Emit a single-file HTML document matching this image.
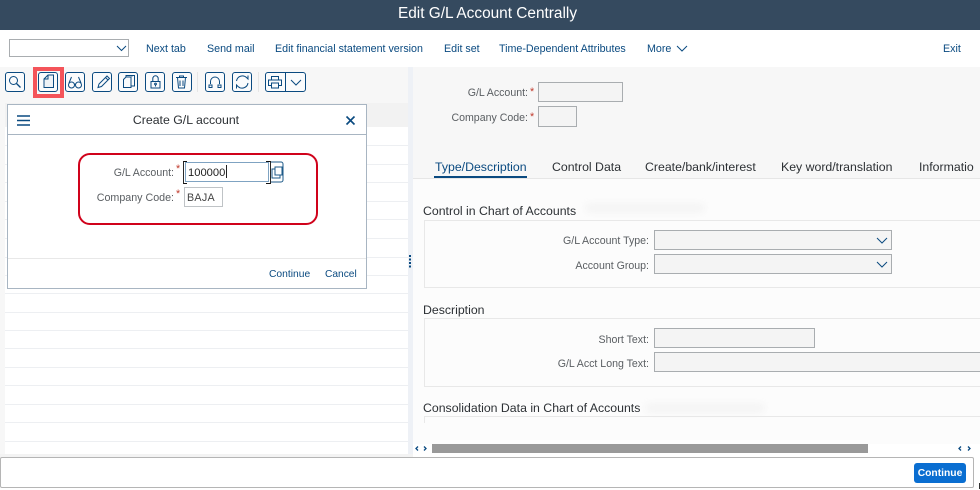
<!DOCTYPE html>
<html><head><meta charset="utf-8">
<style>
html,body{margin:0;padding:0;background:#fff}
#p{position:relative;width:980px;height:490px;overflow:hidden;background:#f7f7f7;font-family:"Liberation Sans",sans-serif;font-size:10.7px;color:#32363a}
#p div,#p span.t{position:absolute;box-sizing:border-box}
.t{white-space:nowrap;line-height:14px}
.l{color:#0a4a80}
.lab{color:#5a5e62;text-align:right;font-size:10.6px}
.inp{background:#f4f4f4;border:1px solid #a9adb0}
.h{font-size:12.3px;color:#2c3034}
.rw{height:1px;background:#edeff2;left:5px;width:403px}
.box{border:1px solid #e8e8e8;background:#fcfcfc}
.b{width:20px;height:20px;border:1px solid #0a4a80;border-radius:3px;background:#fafbfc;top:72px}
svg{position:absolute;left:0;top:0;overflow:visible}
</style></head><body><div id="p">

<div style="left:0;top:0;width:980px;height:30px;background:#354a5f"></div>
<span class="t" style="left:0;top:5px;width:975px;text-align:center;color:#fff;font-size:15.4px;line-height:18px">Edit G/L Account Centrally</span>

<div style="left:0;top:30px;width:980px;height:37px;background:#fff"></div>
<div style="left:9px;top:39px;width:120px;height:18px;border:1px solid #a9adb0;background:#fff"></div>
<svg width="980" height="70"><path d="M117 46l4.500 4.500 4.500-4.500" fill="none" stroke="#0a4a80" stroke-width="1"/><path d="M677 46l5 5 5-5" fill="none" stroke="#0a4a80" stroke-width="1"/></svg>
<span class="t l" style="left:146px;top:42px">Next tab</span>
<span class="t l" style="left:207px;top:42px">Send mail</span>
<span class="t l" style="left:275px;top:42px">Edit financial statement version</span>
<span class="t l" style="left:444px;top:42px">Edit set</span>
<span class="t l" style="left:499px;top:42px">Time-Dependent Attributes</span>
<span class="t l" style="left:647px;top:42px">More</span>
<span class="t l" style="left:943px;top:42px">Exit</span>

<div style="left:5px;top:103px;width:403px;height:24px;background:#f2f2f2"></div>
<div style="left:5px;top:127px;width:403px;height:327px;background:#fff"></div>
<div class="rw" style="top:145px"></div><div class="rw" style="top:164px"></div><div class="rw" style="top:182px"></div><div class="rw" style="top:201px"></div><div class="rw" style="top:219px"></div><div class="rw" style="top:238px"></div><div class="rw" style="top:257px"></div><div class="rw" style="top:275px"></div><div class="rw" style="top:293px"></div><div class="rw" style="top:312px"></div><div class="rw" style="top:330px"></div><div class="rw" style="top:348px"></div><div class="rw" style="top:367px"></div><div class="rw" style="top:385px"></div><div class="rw" style="top:404px"></div><div class="rw" style="top:422px"></div><div class="rw" style="top:441px"></div>
<div style="left:408px;top:67px;width:5px;height:391px;background:#eef1f6"></div>
<div style="left:409px;top:255px;width:2px;height:14px;background:repeating-linear-gradient(#0a4a80 0 2px,transparent 2px 3.5px)"></div>

<div class="b" style="left:5px"></div>
<div class="b" style="left:38px"></div>
<div class="b" style="left:65px"></div>
<div class="b" style="left:92px"></div>
<div class="b" style="left:118px"></div>
<div class="b" style="left:145px"></div>
<div class="b" style="left:172px"></div>
<div class="b" style="left:205px"></div>
<div class="b" style="left:232px"></div>
<div class="b" style="left:265px;width:41px"></div>
<div style="left:285px;top:72px;width:1px;height:20px;background:#0a4a80"></div>
<div style="left:197px;top:72px;width:1px;height:20px;background:#e6e6e6"></div>
<div style="left:258px;top:72px;width:1px;height:20px;background:#e6e6e6"></div>
<div style="left:33px;top:67px;width:31px;height:31px;border:4px solid #f4545a"></div>
<svg width="320" height="100" fill="none" stroke="#0a4a80" stroke-width="1">
<circle cx="13.500" cy="80.500" r="4"/><path d="M16.500 83.500l4 4" stroke-width="1.300"/>
<path d="M44 87.500V79l4-4h5.500v12.500zM44 79h4v-4" fill="#eef2f6"/>
<circle cx="71.500" cy="85" r="3"/><circle cx="78.500" cy="85" r="3"/><path d="M74.500 84.500q.5-.7 1 0M69 83l2.500-6M81 83l-2.500-6"/>
<path d="M98 87.500l1-3.500 8-8 2.500 2.500-8 8zM105.500 77.500l2.500 2.500"/>
<path d="M123.500 87.500v-8l2.500-2.500h5v10.500zM126 77v-1.500h6v1M132 75.500h2.500v10.500h-3"/>
<path d="M151 81.500h9v6.500h-9zM152.800 81.500v-3a2.700 2.700 0 0 1 5.400 0v3"/><circle cx="155.500" cy="84" r=".9"/><path d="M155.500 84.500v2"/>
<path d="M176 77.500h11M179.500 77.500v-1.500h4v1.500M177.500 77.500l1 10.500h6l1-10.500M180 80.500v5.500M183 80.500v5.500"/>
<path d="M210.500 84v-2.500a4.500 4.500 0 0 1 9 0v2.500"/><path d="M209 85h3v2.500h-3zM218 85h3v2.500h-3z"/>
<path d="M236.500 81a6 6 0 0 1 10-3.500l1.500 1.500v-3.500M248 83a6 6 0 0 1-10 3.500l-1.500-1.500v3.500"/>
<path d="M271.500 80v-3.500h7v3.500M271 85.500h-2.500V80h13v5.500H279M271.500 83h7v5h-7z"/>
<path d="M291 80l5 5 5-5"/>
</svg>

<div style="left:413px;top:67px;width:567px;height:111px;background:#f7f7f7"></div>
<div style="left:413px;top:178px;width:567px;height:266px;background:#fcfcfc"></div>
<div style="left:413px;top:178px;width:567px;height:1px;background:#e6e6e6"></div>
<div style="left:413px;top:444px;width:567px;height:14px;background:#fff"></div>

<span class="t lab" style="left:440px;top:86px;width:88px">G/L Account:</span>
<span class="t" style="left:530px;top:85px;color:#c0392b">*</span>
<div class="inp" style="left:538px;top:82px;width:85px;height:20px"></div>
<span class="t lab" style="left:430px;top:111px;width:98px">Company Code:</span>
<span class="t" style="left:530px;top:110px;color:#c0392b">*</span>
<div class="inp" style="left:538px;top:106px;width:39px;height:21px"></div>

<span class="t h" style="left:435px;top:160px;color:#0a4a80">Type/Description</span>
<div style="left:434px;top:176px;width:93px;height:2px;background:#0a4a80"></div>
<span class="t h" style="left:552px;top:160px">Control Data</span>
<span class="t h" style="left:645px;top:160px">Create/bank/interest</span>
<span class="t h" style="left:781px;top:160px">Key word/translation</span>
<span class="t h" style="left:919px;top:160px">Informatio</span>

<span class="t h" style="left:423px;top:204px">Control in Chart of Accounts</span>
<div style="left:585px;top:203px;width:120px;height:10px;background:#f5f5f5;filter:blur(3px);border-radius:5px"></div>
<div class="box" style="left:424px;top:220px;width:570px;height:68px"></div>
<span class="t lab" style="left:520px;top:234px;width:129px">G/L Account Type:</span>
<div class="inp" style="left:654px;top:230px;width:238px;height:20px"></div>
<span class="t lab" style="left:520px;top:259px;width:129px">Account Group:</span>
<div class="inp" style="left:654px;top:254px;width:238px;height:20px"></div>
<svg width="980" height="280"><path d="M877 238l5 5 5-5M877 262l5 5 5-5" fill="none" stroke="#0a4a80" stroke-width="1"/></svg>

<span class="t h" style="left:423px;top:303px">Description</span>
<div class="box" style="left:424px;top:318px;width:570px;height:69px"></div>
<span class="t lab" style="left:520px;top:333px;width:129px">Short Text:</span>
<div class="inp" style="left:654px;top:328px;width:161px;height:20px"></div>
<span class="t lab" style="left:520px;top:357px;width:129px">G/L Acct Long Text:</span>
<div class="inp" style="left:654px;top:352px;width:340px;height:20px"></div>

<span class="t h" style="left:423px;top:401px">Consolidation Data in Chart of Accounts</span>
<div style="left:645px;top:403px;width:120px;height:10px;background:#f5f5f5;filter:blur(3px);border-radius:5px"></div>
<div style="left:424px;top:416px;width:556px;height:1px;background:#e8e8e8"></div>
<div style="left:424px;top:416px;width:1px;height:7px;background:#e8e8e8"></div>

<div style="left:432px;top:444px;width:436px;height:9px;background:#999"></div>
<svg width="980" height="460"><path d="M418 446.500l-2 2 2 2M424 446.500l2 2-2 2M961 446.500l-2 2 2 2M968 446.500l2 2-2 2" fill="none" stroke="#0a4a80" stroke-width="1.300"/></svg>

<div style="left:0;top:454px;width:413px;height:4px;background:#f3f3f3"></div>
<div style="left:0;top:458px;width:980px;height:32px;background:#fff"></div>
<div style="left:0;top:457px;width:974px;height:31px;background:#fff;border:1px solid #b5b5b5;border-radius:2px"></div>
<div style="left:914px;top:463px;width:52px;height:20px;background:#0a6ed1;border-radius:3px;color:#fff;font-weight:bold;font-size:10.3px;line-height:21px;text-align:center">Continue</div>
<div style="left:979px;top:483px;width:1px;height:6px;background:#333"></div>

<div style="left:7px;top:104px;width:360px;height:185px;background:#fff;border:1px solid #a8b5c2"></div>
<div style="left:8px;top:134px;width:358px;height:1px;background:#a8b5c2"></div>
<div style="left:8px;top:258px;width:358px;height:1px;background:#e8e8e8"></div>
<span class="t" style="left:6px;top:113px;width:360px;text-align:center;font-size:12.3px;color:#2c3034">Create G/L account</span>
<svg width="380" height="300" fill="none" stroke="#0a4a80">
<path d="M17 116h13M17 120.500h13M17 125h13" stroke-width="1.400"/>
<path d="M346.500 116.500l8 8M354.500 116.500l-8 8" stroke-width="1.600"/>
</svg>
<div style="left:78px;top:153px;width:240px;height:72px;border:2.500px solid #d0021b;border-radius:12px"></div>
<span class="t lab" style="left:90px;top:166px;width:84px">G/L Account:</span>
<span class="t" style="left:176px;top:162px;color:#c0392b">*</span>
<span class="t lab" style="left:80px;top:191px;width:94px;font-size:10.7px">Company Code:</span>
<span class="t" style="left:176px;top:187px;color:#c0392b">*</span>
<div style="left:185px;top:162px;width:84px;height:20px;background:#fff;border:1px solid #7fa3c2"></div>
<span class="t" style="left:188px;top:166px;font-size:11.2px;color:#222">100000</span>
<div style="left:226px;top:165px;width:1px;height:13px;background:#222"></div>
<div style="left:184px;top:187px;width:39px;height:20px;background:#fff;border:1px solid #bfc3c6"></div>
<span class="t" style="left:187px;top:191px;font-size:10.7px;letter-spacing:.3px;color:#444">BAJA</span>
<svg width="300" height="200" fill="none">
<path d="M187 161.500h-3.500v22h3.500M266 161.500h4.500v22h-4.500" stroke="#111" stroke-width=".9"/>
<path d="M271 162h10a2 2 0 0 1 2 2v16a2 2 0 0 1-2 2h-10" stroke="#1d5a88" stroke-width="1"/>
<path d="M275 169h-3v9h8v-3M275 167h7v8h-7z" stroke="#1d5a88" stroke-width="1"/>
</svg>
<span class="t l" style="left:269px;top:268px;font-size:10.3px">Continue</span>
<span class="t l" style="left:325px;top:268px;font-size:10.2px">Cancel</span>

</div></body></html>
